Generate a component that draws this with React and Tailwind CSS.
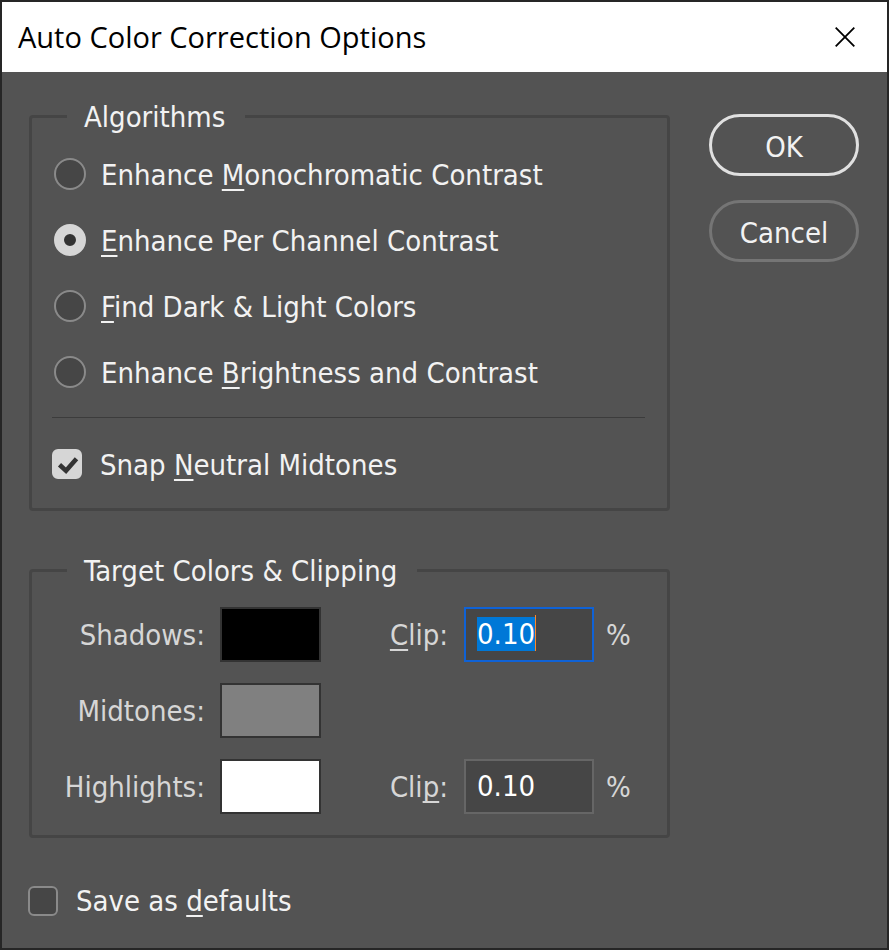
import { useEffect, useRef } from "react";

const radios = [
  { id: "mono", before: "Enhance ", key: "M", after: "onochromatic Contrast" },
  { id: "channel", before: "", key: "E", after: "nhance Per Channel Contrast" },
  { id: "find", before: "", key: "F", after: "ind Dark & Light Colors" },
  { id: "bright", before: "Enhance ", key: "B", after: "rightness and Contrast" },
];

function Mnemonic({ before = "", char, after = "" }) {
  return (
    <span className="whitespace-pre">
      {before}
      <span className="underline decoration-2 underline-offset-4 [text-decoration-skip-ink:none]">{char}</span>
      {after}
    </span>
  );
}

function CheckBox({ id, defaultChecked }) {
  return (
    <span className="grid shrink-0">
      <input
        id={id}
        type="checkbox"
        defaultChecked={defaultChecked}
        className="peer col-start-1 row-start-1 size-[30px] appearance-none rounded-md border-2 border-[#8a8a8a] bg-[#464646] checked:border-[#d6d6d6] checked:bg-[#d6d6d6]"
      />
      <svg
        viewBox="0 0 30 30"
        className="pointer-events-none invisible col-start-1 row-start-1 size-[30px] peer-checked:visible"
        fill="none"
        stroke="#333"
        strokeWidth="4.6"
        aria-hidden="true"
      >
        <path d="M7.5 15.8 L14 21.8 L24.5 9.8" />
      </svg>
    </span>
  );
}

function Group({ title, className, children }) {
  return (
    <fieldset className={`min-w-0 rounded-sm border-[3px] border-[#454545] ${className}`}>
      <legend className="ml-[35px] h-[34px] pr-5 pl-[17px] leading-9">{title}</legend>
      {children}
    </fieldset>
  );
}

function Swatch({ id, label, color }) {
  return (
    <>
      <label htmlFor={id} className="w-[173px] pt-px text-right text-[#d6d6d6]">
        {label}
      </label>
      <button id={id} type="button" className={`ml-[15px] h-[55px] w-[101px] border-2 border-[#333] ${color}`} />
    </>
  );
}

function Clip({ id, label, focused }) {
  const ref = useRef(null);
  useEffect(() => {
    if (focused) {
      ref.current.focus();
      ref.current.select();
    }
  }, [focused]);
  return (
    <>
      <label htmlFor={id} className="ml-auto pt-px text-[#d6d6d6]">
        {label}
      </label>
      <span className="relative ml-4">
        <input
          id={id}
          ref={ref}
          type="text"
          defaultValue="0.10"
          className="block h-[55px] w-[130px] border-2 border-[#666] bg-[#464646] px-[11px] leading-9 text-white outline-none selection:bg-[#0078d7] selection:text-white focus:border-[#0f62d6]"
        />
        {focused && <span className="absolute top-2 left-[71px] h-9 w-px bg-[#ff8728]" />}
      </span>
      <span className="ml-3 w-[61px] pt-px text-[#d6d6d6]">%</span>
    </>
  );
}

export default function App() {
  return (
    <div className="flex min-h-screen flex-col border-2 border-[#262626] bg-[#535353] font-['DejaVu_Sans_Condensed','DejaVu_Sans',sans-serif] text-[29px] leading-9 text-[#f2f2f2]">
      <header className="flex h-[70px] items-center justify-between bg-white pr-8 pl-4 text-black">
        <h1 className="font-['Open_Sans',sans-serif]">Auto Color Correction Options</h1>
        <button type="button" aria-label="Close">
          <svg viewBox="0 0 20 20" className="size-5" stroke="currentColor" strokeWidth="1.8" aria-hidden="true">
            <path d="M0.7 0.7 L19.3 19.3 M19.3 0.7 L0.7 19.3" />
          </svg>
        </button>
      </header>

      <main className="flex gap-[39px] pt-[27px] pr-7 pb-7 pl-[27px]">
        <div className="min-w-0 flex-1">
          <Group title="Algorithms" className="mb-[42px] pt-2 pb-[14px]">
            {radios.map((r) => (
              <div key={r.id} className="flex h-[66px] items-center gap-[15px] pl-[22px]">
                <input
                  id={r.id}
                  type="radio"
                  name="algorithm"
                  defaultChecked={r.id === "channel"}
                  className="size-8 shrink-0 appearance-none rounded-full border-2 border-[#8a8a8a] bg-[#464646] checked:border-[10px] checked:border-[#d6d6d6] checked:bg-[#333]"
                />
                <label htmlFor={r.id} className="pt-px">
                  <Mnemonic before={r.before} char={r.key} after={r.after} />
                </label>
              </div>
            ))}
            <hr className="mt-3 mr-[22px] mb-4 ml-5 border-[#3c3c3c]" />
            <div className="flex h-[60px] items-center gap-[18px] pl-5">
              <CheckBox id="snap" defaultChecked />
              <label htmlFor="snap" className="pt-px">
                <Mnemonic before="Snap " char="N" after="eutral Midtones" />
              </label>
            </div>
          </Group>

          <Group title="Target Colors & Clipping" className="pt-[9px] pb-[11px]">
            <div className="flex h-[76px] items-center">
              <Swatch id="shadows" label="Shadows:" color="bg-black" />
              <Clip id="clip-shadows" label={<Mnemonic char="C" after="lip:" />} focused />
            </div>
            <div className="flex h-[76px] items-center">
              <Swatch id="midtones" label="Midtones:" color="bg-[#808080]" />
            </div>
            <div className="flex h-[76px] items-center">
              <Swatch id="highlights" label="Highlights:" color="bg-white" />
              <Clip id="clip-highlights" label={<Mnemonic before="Cli" char="p" after=":" />} />
            </div>
          </Group>

          <div className="-ml-px mt-[44px] flex items-center gap-[18px]">
            <CheckBox id="save" />
            <label htmlFor="save" className="pt-px">
              <Mnemonic before="Save as " char="d" after="efaults" />
            </label>
          </div>
        </div>

        <div className="flex w-[150px] shrink-0 flex-col gap-6 pt-[15px]">
          <button type="button" className="h-[62px] rounded-full border-[3px] border-[#e0e0e0] pt-[3px]">
            OK
          </button>
          <button type="button" className="h-[62px] rounded-full border-[3px] border-[#757575] pt-[3px]">
            Cancel
          </button>
        </div>
      </main>
    </div>
  );
}
